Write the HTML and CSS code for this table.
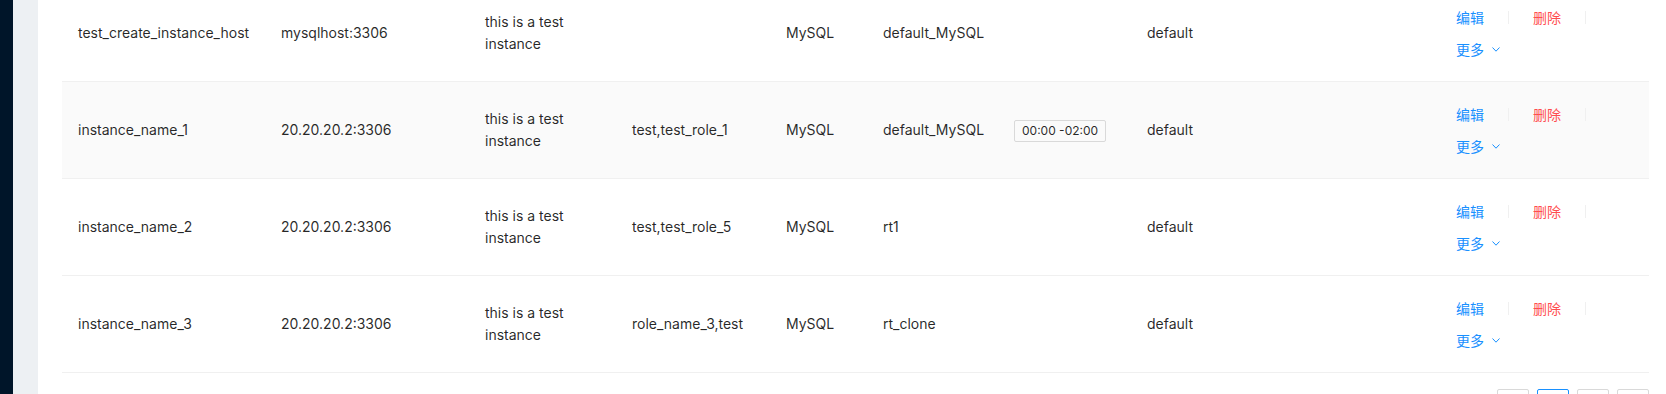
FILE: index.html
```html
<!doctype html>
<html lang="zh">
<head>
    <meta charset="UTF-8">
    <title>Instances</title>
    <link rel="stylesheet" href="styles.css">
</head>
<body>
<div class="layout">
    <div class="sider"></div>
    <div class="gutter"></div>
    <div class="content">
        <table class="table">
            <colgroup>
                <col style="width:203px">
                <col style="width:204px">
                <col style="width:147px">
                <col style="width:154px">
                <col style="width:97px">
                <col style="width:131px">
                <col style="width:133px">
                <col style="width:309px">
                <col style="width:209px">
            </colgroup>
            <tbody>
            <tr>
                <td>test_create_instance_host</td>
                <td>mysqlhost:3306</td>
                <td>this is a test instance</td>
                <td></td>
                <td>MySQL</td>
                <td>default_MySQL</td>
                <td></td>
                <td>default</td>
                <td>
                    <div class="actions">
                        <a class="link">编辑</a>
                        <span class="divider"></span>
                        <a class="link danger">删除</a>
                        <span class="divider"></span>
                        <a class="link">更多<svg class="chevron" width="8" height="5" viewBox="0 0 8 5"><path d="M0.5 0.5 L4 4.2 L7.5 0.5" fill="none" stroke="#1890ff" stroke-width="1"/></svg></a>
                    </div>
                </td>
            </tr>
            <tr class="hover">
                <td>instance_name_1</td>
                <td>20.20.20.2:3306</td>
                <td>this is a test instance</td>
                <td>test,test_role_1</td>
                <td>MySQL</td>
                <td>default_MySQL</td>
                <td><span class="tag">00:00 -02:00</span></td>
                <td>default</td>
                <td>
                    <div class="actions">
                        <a class="link">编辑</a>
                        <span class="divider"></span>
                        <a class="link danger">删除</a>
                        <span class="divider"></span>
                        <a class="link">更多<svg class="chevron" width="8" height="5" viewBox="0 0 8 5"><path d="M0.5 0.5 L4 4.2 L7.5 0.5" fill="none" stroke="#1890ff" stroke-width="1"/></svg></a>
                    </div>
                </td>
            </tr>
            <tr>
                <td>instance_name_2</td>
                <td>20.20.20.2:3306</td>
                <td>this is a test instance</td>
                <td>test,test_role_5</td>
                <td>MySQL</td>
                <td>rt1</td>
                <td></td>
                <td>default</td>
                <td>
                    <div class="actions">
                        <a class="link">编辑</a>
                        <span class="divider"></span>
                        <a class="link danger">删除</a>
                        <span class="divider"></span>
                        <a class="link">更多<svg class="chevron" width="8" height="5" viewBox="0 0 8 5"><path d="M0.5 0.5 L4 4.2 L7.5 0.5" fill="none" stroke="#1890ff" stroke-width="1"/></svg></a>
                    </div>
                </td>
            </tr>
            <tr>
                <td>instance_name_3</td>
                <td>20.20.20.2:3306</td>
                <td>this is a test instance</td>
                <td>role_name_3,test</td>
                <td>MySQL</td>
                <td>rt_clone</td>
                <td></td>
                <td>default</td>
                <td>
                    <div class="actions">
                        <a class="link">编辑</a>
                        <span class="divider"></span>
                        <a class="link danger">删除</a>
                        <span class="divider"></span>
                        <a class="link">更多<svg class="chevron" width="8" height="5" viewBox="0 0 8 5"><path d="M0.5 0.5 L4 4.2 L7.5 0.5" fill="none" stroke="#1890ff" stroke-width="1"/></svg></a>
                    </div>
                </td>
            </tr>
            </tbody>
        </table>
        <ul class="pagination">
            <li class="page-item"></li>
            <li class="page-item active"></li>
            <li class="page-item"></li>
            <li class="page-item"></li>
        </ul>
    </div>
</div>
</body>
</html>
```

FILE: styles.css
```css
body {
    margin: 0;
    height: 394px;
    overflow: hidden;
    font-family: 'Inter', 'Noto Sans CJK SC', sans-serif;
    font-size: 14px;
    color: rgba(0, 0, 0, 0.85);
}
.layout {
    display: flex;
    min-height: 394px;
}
.sider {
    width: 13px;
    background-color: #001529;
    flex-shrink: 0;
}
.gutter {
    width: 25px;
    background-color: #edf0f3;
    flex-shrink: 0;
}
.content {
    flex: 1;
    background-color: #ffffff;
    padding: 0 17px 0 24px;
}
.table {
    width: 1587px;
    table-layout: fixed;
    border-collapse: separate;
    border-spacing: 0;
    margin-top: -15px;
}
.table td {
    box-sizing: border-box;
    height: 97px;
    padding: 0 16px;
    line-height: 22px;
    vertical-align: middle;
    border-bottom: 1px solid #f0f0f0;
}
.hover td {
    background-color: #fafafa;
}
.tag {
    display: inline-block;
    font-size: 12px;
    line-height: 20px;
    padding: 0 7px;
    border: 1px solid #d9d9d9;
    border-radius: 2px;
    background-color: #fafafa;
    white-space: nowrap;
}
.actions {
    display: flex;
    flex-wrap: wrap;
    align-items: center;
    row-gap: 10px;
}
.link {
    color: #1890ff;
    line-height: 22px;
    font-family: 'Noto Sans CJK SC', sans-serif;
    display: inline-flex;
    align-items: center;
    cursor: pointer;
}
.danger {
    color: #ff4d4f;
}
.divider {
    width: 1px;
    height: 13px;
    margin: 0 24px;
    background-color: #f0f0f0;
}
.chevron {
    margin-left: 8px;
}
.pagination {
    list-style: none;
    margin: 16px 0 0;
    padding: 0;
    display: flex;
    justify-content: flex-end;
    gap: 8px;
}
.page-item {
    box-sizing: border-box;
    width: 32px;
    height: 32px;
    border: 1px solid #d9d9d9;
    border-radius: 2px;
}
.page-item.active {
    border-color: #1890ff;
}
```
